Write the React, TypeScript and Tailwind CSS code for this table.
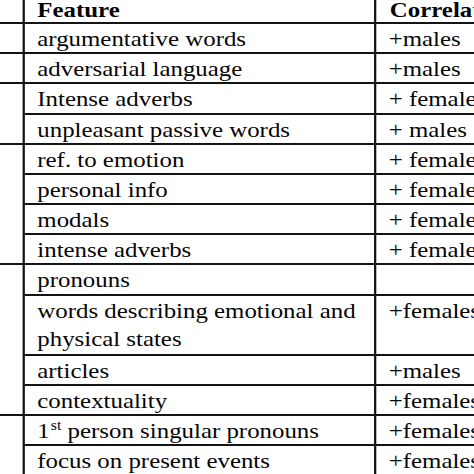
import React from "react";

type Row = { f: React.ReactNode; c: string; h: string };

const groups: Row[][] = [
  [{ f: "argumentative words", c: "+males", h: "h-[28px]" }],
  [{ f: "adversarial language", c: "+males", h: "h-[28px]" }],
  [
    { f: "Intense adverbs", c: "+ females", h: "h-[29px]" },
    { f: "unpleasant passive words", c: "+ males", h: "h-[28px]" },
  ],
  [
    { f: "ref. to emotion", c: "+ females", h: "h-[28px]" },
    { f: "personal info", c: "+ females", h: "h-[28px]" },
    { f: "modals", c: "+ females", h: "h-[28px]" },
    { f: "intense adverbs", c: "+ females", h: "h-[28px]" },
  ],
  [
    { f: "pronouns", c: "", h: "h-[29px]" },
    {
      f: (
        <>
          words describing emotional and
          <br />
          physical states
        </>
      ),
      c: "+females",
      h: "h-[58px]",
    },
    { f: "articles", c: "+males", h: "h-[28px]" },
    { f: "contextuality", c: "+females", h: "h-[28px]" },
  ],
  [
    {
      f: (
        <>
          1<sup className="text-[14px] relative -top-[8px] pl-px">st</sup> person singular pronouns
        </>
      ),
      c: "+females",
      h: "h-[28px]",
    },
    { f: "focus on present events", c: "+females", h: "h-[28px]" },
  ],
];

export default function App() {
  return (
    <div className="w-[474px] h-[474px] overflow-hidden bg-white text-[#050505] font-[family-name:Liberation_Serif,Times_New_Roman,serif] text-[22px]">
      <div className="w-[460px] origin-top-left scale-x-[1.13] flex flex-col">
        <div className="flex h-[24px] border-b-2 border-[#141414] font-bold leading-[20px]">
          <div className="w-[22px] shrink-0 border-r-2 border-[#141414]" />
          <div className="w-[311px] shrink-0 border-r-2 border-[#141414] pl-[11px] whitespace-nowrap">
            Feature
          </div>
          <div className="flex-1 pl-[12px] whitespace-nowrap">Correlation</div>
        </div>
        {groups.map((g, gi) => (
          <div key={gi} className="flex border-b-2 border-[#141414]">
            <div className="w-[22px] shrink-0 border-r-2 border-[#141414]" />
            <div className="flex flex-col flex-1">
              {g.map((r, ri) => (
                <div
                  key={ri}
                  className={
                    (ri > 0 ? "border-t-2 border-[#141414] " : "") +
                    "flex leading-[28px] box-content " +
                    r.h
                  }
                >
                  <div className="w-[311px] shrink-0 border-r-2 border-[#141414] pl-[11px] pt-px whitespace-nowrap">
                    {r.f}
                  </div>
                  <div className="flex-1 pl-[11px] pt-px whitespace-nowrap">{r.c}</div>
                </div>
              ))}
            </div>
          </div>
        ))}
      </div>
    </div>
  );
}
